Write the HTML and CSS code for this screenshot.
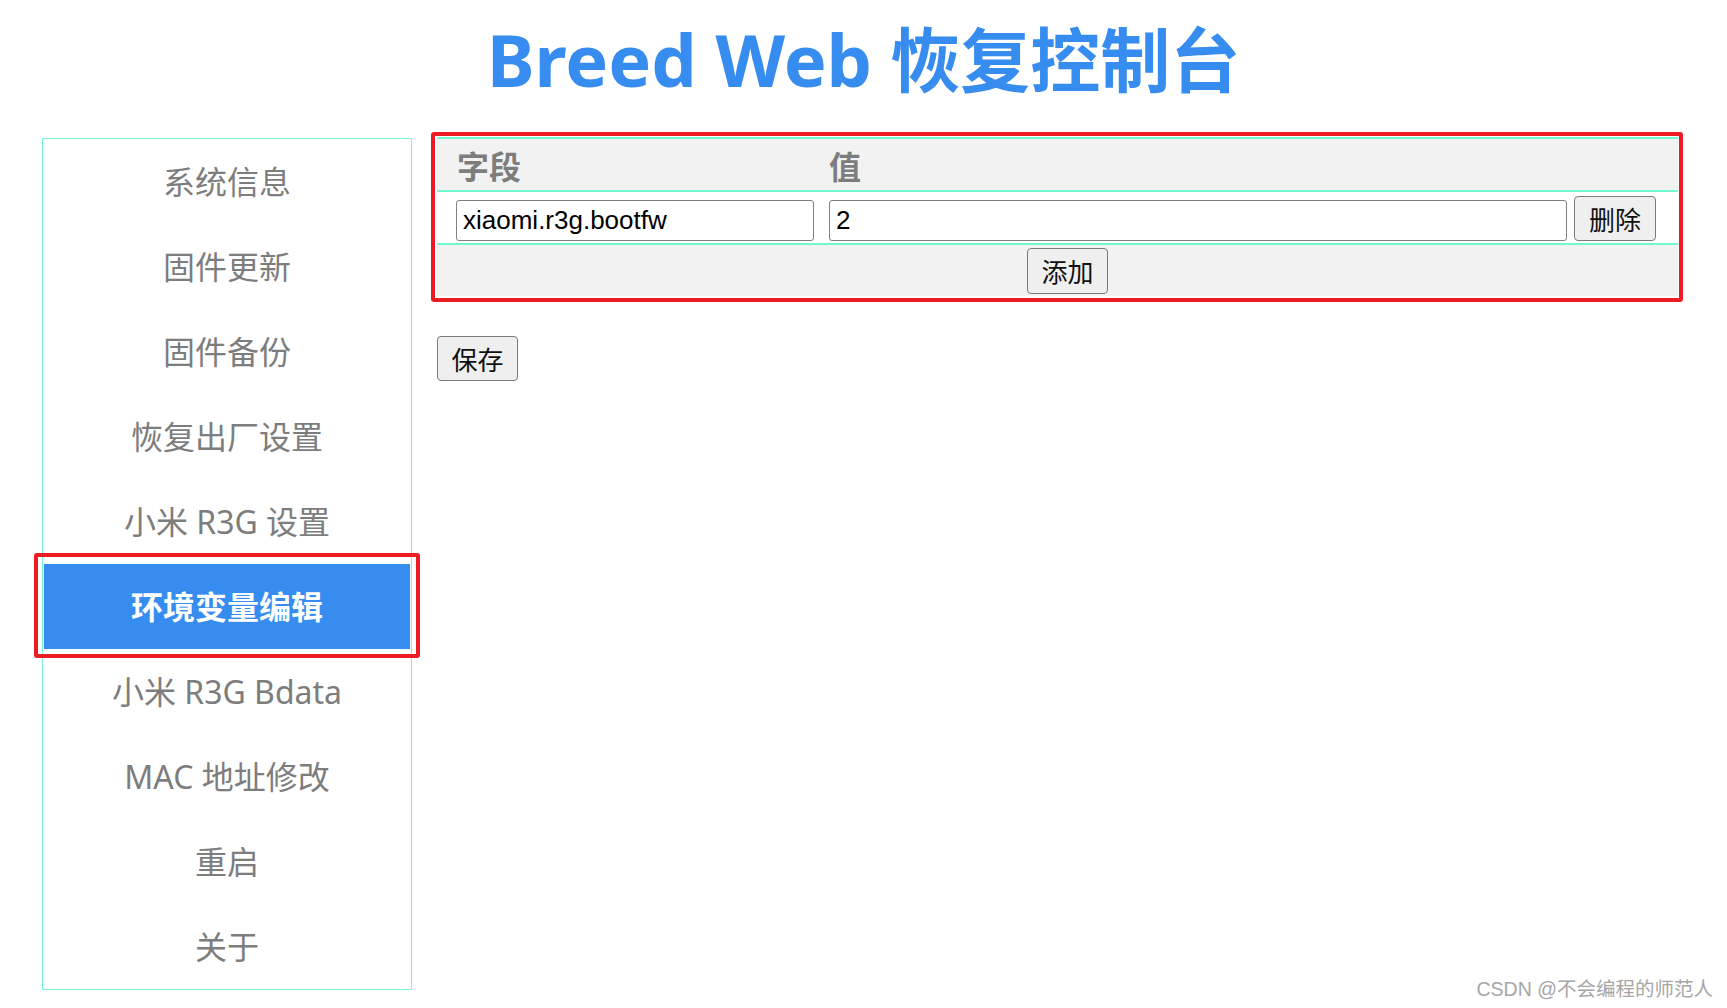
FILE: index.html
```html
<!DOCTYPE html>
<html lang="zh-CN">
<head>
<meta charset="utf-8">
<title>Breed Web 恢复控制台</title>
<link rel="stylesheet" href="styles.css">
</head>
<body>
<h1 class="title"><span class="title-en">Breed Web</span> 恢复控制台</h1>
<div class="layout">
  <nav class="sidebar">
    <a class="nav-item">系统信息</a>
    <a class="nav-item">固件更新</a>
    <a class="nav-item">固件备份</a>
    <a class="nav-item">恢复出厂设置</a>
    <a class="nav-item">小米 R3G 设置</a>
    <a class="nav-item active">环境变量编辑</a>
    <a class="nav-item">小米 R3G Bdata</a>
    <a class="nav-item">MAC 地址修改</a>
    <a class="nav-item">重启</a>
    <a class="nav-item">关于</a>
  </nav>
  <main class="main">
    <div class="env-table">
      <div class="row head">
        <div class="col-key">字段</div>
        <div class="col-val">值</div>
      </div>
      <div class="row body">
        <input class="input input-key" type="text" value="xiaomi.r3g.bootfw">
        <input class="input input-val" type="text" value="2">
        <button class="btn btn-del">删除</button>
      </div>
      <div class="row foot">
        <button class="btn">添加</button>
      </div>
    </div>
    <button class="btn btn-save">保存</button>
  </main>
</div>
<div class="mark mark-table"></div>
<div class="mark mark-nav"></div>
<div class="watermark">CSDN @不会编程的师范人</div>
</body>
</html>
```

FILE: styles.css
```css
html, body {
  margin: 0;
  padding: 0;
  background: #ffffff;
}
body {
  position: relative;
  width: 1727px;
  height: 1008px;
  overflow: hidden;
  font-family: "Noto Sans", "Noto Sans CJK SC", sans-serif;
}
.title {
  margin: 0;
  padding: 24px 0 43px;
  height: 70px;
  line-height: 70px;
  font-size: 70px;
  font-weight: 700;
  color: #378cf0;
  text-align: center;
  white-space: nowrap;
}
.title-en {
  font-size: 72px;
}
.layout {
  display: flex;
  align-items: flex-start;
  margin-left: 42px;
  width: 1636px;
}
.sidebar {
  display: flex;
  flex-direction: column;
  width: 370px;
  box-sizing: border-box;
  margin-top: 1px;
  border: 1px solid #79f5d6;
  padding: 0 1px;
}
.nav-item {
  display: block;
  height: 85px;
  line-height: 85px;
  text-align: center;
  font-size: 32px;
  color: #7d7d7d;
  text-decoration: none;
}
.nav-item.active {
  background: #378cf0;
  color: #ffffff;
  font-weight: 700;
}
.main {
  margin-left: 25px;
  flex: 1;
}
.env-table {
  display: flex;
  flex-direction: column;
  width: 1241px;
}
.row {
  display: flex;
  border-top: 2px solid #70f8d0;
  height: 51px;
}
.head {
  background: #f2f2f2;
  align-items: center;
  padding-left: 20px;
  font-size: 32px;
  font-weight: 700;
  color: #7d7d7d;
}
.col-key {
  width: 357px;
  margin-right: 15px;
}
.body {
  background: #ffffff;
  align-items: flex-end;
  padding-left: 19px;
  padding-bottom: 2px;
  box-sizing: border-box;
  height: 53px;
}
.input {
  box-sizing: border-box;
  height: 41px;
  border: 1px solid #808080;
  border-radius: 3px;
  padding: 0 6px;
  font-family: "Liberation Sans", Arial, sans-serif;
  font-size: 26px;
  color: #000000;
  background: #ffffff;
  outline: none;
}
.input-key {
  width: 358px;
  margin-right: 15px;
}
.input-val {
  width: 738px;
  margin-right: 7px;
}
.foot {
  background: #f2f2f2;
  align-items: center;
  justify-content: center;
  padding-left: 20px;
}
.btn {
  box-sizing: border-box;
  height: 45px;
  padding: 0 13px;
  border: 1px solid #7a7a7a;
  border-radius: 4px;
  background: #efefef;
  font-family: "Noto Sans CJK SC", sans-serif;
  font-size: 26px;
  line-height: 43px;
  color: #111111;
  white-space: nowrap;
}
.foot .btn {
  height: 46px;
}
.btn-del {
  width: 82px;
}
.btn-save {
  display: block;
  margin-top: 40px;
  width: 81px;
}
.mark {
  position: absolute;
  border: 4px solid #ec1c24;
  border-radius: 3px;
}
.mark-table {
  left: 431px;
  top: 132px;
  width: 1244px;
  height: 162px;
}
.mark-nav {
  left: 34px;
  top: 553px;
  width: 378px;
  height: 97px;
}
.watermark {
  position: absolute;
  right: 14px;
  top: 973px;
  font-family: "Liberation Sans", "Noto Sans CJK SC", sans-serif;
  font-size: 19.5px;
  color: #a6a6a6;
  white-space: nowrap;
}
```
